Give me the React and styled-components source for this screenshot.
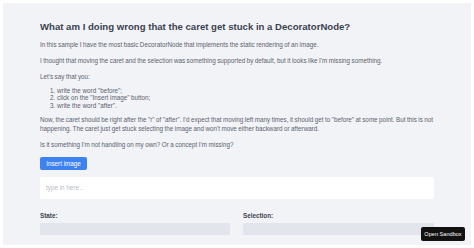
import React from "react";
import styled, { createGlobalStyle } from "styled-components";

const Global = createGlobalStyle`
  html, body { margin: 0; padding: 0; background: #ffffff; }
  body { font-family: "Liberation Sans", Arial, sans-serif; }
  * { box-sizing: border-box; }
`;

const Panel = styled.div`
  margin: 3px;
  width: 468px;
  height: 242px;
  background: #f1f3f7;
  padding: 16.5px 37px 0 37px;
`;

const Title = styled.h1`
  margin: 0 0 7px;
  font-size: 9.6px;
  line-height: 13px;
  font-weight: 700;
  color: #3b4250;
  white-space: nowrap;
`;

const Para = styled.p`
  margin: 0 0 ${(p) => p.$mb ?? 7}px;
  font-size: 6.3px;
  line-height: 9px;
  word-spacing: -0.25px;
  color: #5c626d;
`;

const List = styled.ol`
  margin: 6px 0 5.7px;
  padding-left: 17px;
  font-size: 6.3px;
  line-height: 7.7px;
  color: #5c626d;
`;

const Button = styled.button`
  display: block;
  margin: 0 0 7px;
  padding: 0;
  height: 13px;
  width: 47px;
  border: none;
  border-radius: 2px;
  background: #3e82f1;
  color: #ffffff;
  font-family: inherit;
  font-size: 6.3px;
  line-height: 13px;
  text-align: center;
`;

const Editor = styled.div`
  height: 22px;
  background: #ffffff;
  border-radius: 2px;
  padding: 0 6px;
  display: flex;
  align-items: center;
  font-size: 6.3px;
  color: #b8bcc4;
`;

const Grid = styled.div`
  margin-top: 12.5px;
  display: grid;
  grid-template-columns: 190px 191px;
  column-gap: 13px;
`;

const Section = styled.div`
  display: flex;
  flex-direction: column;
  gap: 2.5px;
`;

const Label = styled.div`
  font-size: 6.3px;
  line-height: 9px;
  font-weight: 700;
  color: #3b4250;
`;

const Box = styled.div`
  height: 12px;
  background: #e2e6ec;
  border-radius: 1px;
`;

const Sandbox = styled.div`
  position: fixed;
  left: 421px;
  top: 227px;
  width: 44px;
  height: 14px;
  background: #111111;
  color: #ffffff;
  border-radius: 2px;
  font-size: 5.6px;
  display: flex;
  align-items: center;
  justify-content: center;
  white-space: nowrap;
`;

export default function App() {
  return (
    <>
      <Global />
      <Panel>
        <Title>What am I doing wrong that the caret get stuck in a DecoratorNode?</Title>
        <Para>In this sample I have the most basic DecoratorNode that implements the static rendering of an image.</Para>
        <Para>I thought that moving the caret and the selection was something supported by default, but it looks like I'm missing something.</Para>
        <Para $mb={0}>Let's say that you:</Para>
        <List>
          <li>write the word "before";</li>
          <li>click on the "Insert image" button;</li>
          <li>write the word "after".</li>
        </List>
        <Para>Now, the caret should be right after the "r" of "after". I'd expect that moving left many times, it should get to "before" at some point. But this is not happening. The caret just get stuck selecting the image and won't move either backward or afterward.</Para>
        <Para $mb={7.5}>Is it something I'm not handling on my own? Or a concept I'm missing?</Para>
        <Button>Insert image</Button>
        <Editor>type in here...</Editor>
        <Grid>
          <Section>
            <Label>State:</Label>
            <Box />
          </Section>
          <Section>
            <Label>Selection:</Label>
            <Box />
          </Section>
        </Grid>
      </Panel>
      <Sandbox>Open Sandbox</Sandbox>
    </>
  );
}
